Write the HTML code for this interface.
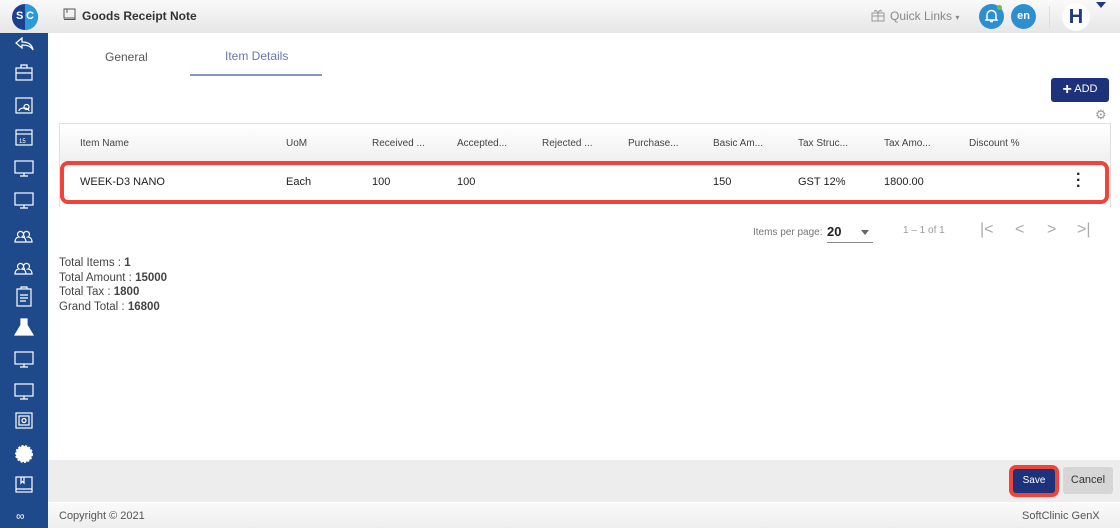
<!DOCTYPE html>
<html><head><meta charset="utf-8"><style>
*{margin:0;padding:0;box-sizing:border-box}
body{width:1120px;height:528px;overflow:hidden;background:#fff;font-family:"Liberation Sans",sans-serif;position:relative;color:#333}
.a{position:absolute}
.hdr{left:0;top:0;width:1120px;height:33px;background:linear-gradient(#fafafa,#e6e6e6)}
.side{left:0;top:33px;width:48px;height:495px;background:#1e4a8c}
.th{top:138px;font-size:10px;color:#444}
.td{top:176px;font-size:11px;color:#222}
</style></head><body>
<div class="a hdr"></div>
<div class="a" style="left:12px;top:4px;width:26px;height:26px;border-radius:50%;background:#1c3f8e;overflow:hidden">
<div class="a" style="left:13px;top:0;width:13px;height:26px;background:#2a9ad8"></div>
<span class="a" style="left:4px;top:6px;color:#fff;font-weight:bold;font-size:11px">S</span><span class="a" style="left:14px;top:6px;color:#fff;font-weight:bold;font-size:11px">C</span></div>
<svg class="a" style="left:63px;top:8px" width="13" height="12" viewBox="0 0 13 12"><rect x="1" y="1" width="11" height="9" fill="none" stroke="#555"/><path d="M1 10h11v1.5H1M4 1v4" stroke="#555" fill="none"/></svg>
<div class="a" style="left:82px;top:9px;font-size:12px;font-weight:bold;color:#333">Goods Receipt Note</div>
<svg class="a" style="left:871px;top:8px" width="14" height="14" viewBox="0 0 14 14"><rect x="1" y="5" width="12" height="8" fill="none" stroke="#999"/><path d="M1 8h12M7 5v8M7 5C5 1 3 2 4 4M7 5c2-4 4-3 3-1" stroke="#999" fill="none"/></svg>
<div class="a" style="left:890px;top:9px;font-size:12px;color:#888">Quick Links <span style="font-size:8px">▾</span></div>
<div class="a" style="left:979px;top:4px;width:25px;height:25px;border-radius:50%;background:#2d8fd0"></div>
<svg class="a" style="left:985px;top:9px" width="13" height="14" viewBox="0 0 13 14"><path d="M2 10V6a4.5 4.5 0 0 1 9 0v4l1 1H1z" fill="none" stroke="#fff" stroke-width="1.5"/><path d="M5 12.5h3" stroke="#fff" stroke-width="1.5"/></svg>
<div class="a" style="left:997px;top:5px;width:5px;height:5px;border-radius:50%;background:#6cc04a"></div>
<div class="a" style="left:1011px;top:4px;width:25px;height:25px;border-radius:50%;background:#2d8fd0;color:#fff;text-align:center;font-size:11px;font-weight:bold;line-height:25px">en</div>
<div class="a" style="left:1049px;top:6px;width:1px;height:22px;background:#ddd"></div>
<div class="a" style="left:1062px;top:3px;width:28px;height:28px;border-radius:50%;background:#fff;color:#1e3c7e;font-weight:bold;font-size:20px;text-align:center;line-height:28px">H</div>
<div class="a" style="left:1096px;top:2px;border:5px solid transparent;border-top:6px solid #1e3c7e"></div>

<div class="a side"></div>
<svg class="a" style="left:0;top:33px" width="48" height="495" viewBox="0 0 48 495" fill="none" stroke="#fff" stroke-width="1.2">
<path d="M22 5l-6 5 6 5v-3c5 0 9 1 11 5-1-6-5-8-11-8z"/>
<rect x="16" y="35" width="16" height="12"/><path d="M16 40h16M21 35v-3h6v3"/>
<rect x="16" y="65" width="16" height="15"/><path d="M19 78c0-4 10-4 10 0M24 74a2.5 2.5 0 1 0 0-.1"/>
<rect x="16" y="97" width="16" height="15"/><path d="M16 101h16"/><text x="19" y="110" fill="#fff" stroke="none" font-size="6">15</text>
<rect x="15" y="128" width="18" height="12"/><path d="M24 140v3M20 143h8"/>
<rect x="15" y="160" width="18" height="12"/><path d="M24 172v3M20 175h8"/>
<path d="M15 209c0-5 4-5 4-5a3 3 0 1 1 3 0s4 0 4 5zM22 209h10c0-5-4-5-4-5a3 3 0 1 0-3 0"/>
<path d="M15 241c0-5 4-5 4-5a3 3 0 1 1 3 0s4 0 4 5zM22 241h10c0-5-4-5-4-5a3 3 0 1 0-3 0"/>
<rect x="17" y="256" width="14" height="17"/><path d="M21 256v-2h6v2M20 262h8M20 265h8M20 268h6"/>
<path d="M21 286v6l-6 10h18l-6-10v-6z" fill="#fff"/>
<rect x="15" y="319" width="18" height="12"/><path d="M24 331v3M20 334h8"/>
<rect x="15" y="351" width="18" height="12"/><path d="M24 363v3M20 366h8"/>
<rect x="16" y="380" width="16" height="15"/><rect x="19" y="383" width="10" height="9"/><circle cx="24" cy="387.5" r="2"/>
<circle cx="24" cy="421" r="8" fill="#fff" stroke-dasharray="2 1.5" stroke-width="2"/>
<rect x="16" y="444" width="16" height="15"/><path d="M21 444v6l1.5-1.5 1.5 1.5v-6M16 456h16"/>
<text x="16" y="487" fill="#fff" stroke="none" font-size="12">∞</text>
</svg>

<div class="a" style="left:105px;top:50px;font-size:12px;color:#555">General</div>
<div class="a" style="left:225px;top:49px;font-size:12px;color:#6a77a9">Item Details</div>
<div class="a" style="left:190px;top:74px;width:132px;height:2px;background:#8896c9"></div>

<div class="a" style="left:1051px;top:78px;width:58px;height:24px;background:#1d327a;border-radius:3px;color:#fff;font-size:11px;line-height:22px;text-align:center"><b style="font-size:16px;vertical-align:-2px">+</b> ADD</div>
<div class="a" style="left:1095px;top:107px;font-size:13px;color:#999">⚙</div>

<div class="a" style="left:59px;top:123px;width:1052px;height:84px;border:1px solid #e0e0e0;border-bottom:none"></div>
<div class="a" style="left:60px;top:124px;width:1050px;height:37px;background:linear-gradient(#fff,#f0f0f0)"></div>
<div class="a th" style="left:80px">Item Name</div>
<div class="a th" style="left:286px">UoM</div>
<div class="a th" style="left:372px">Received ...</div>
<div class="a th" style="left:457px">Accepted...</div>
<div class="a th" style="left:542px">Rejected ...</div>
<div class="a th" style="left:628px">Purchase...</div>
<div class="a th" style="left:713px">Basic Am...</div>
<div class="a th" style="left:798px">Tax Struc...</div>
<div class="a th" style="left:884px">Tax Amo...</div>
<div class="a th" style="left:969px">Discount %</div>

<div class="a" style="left:60px;top:161px;width:1049px;height:43px;border:4px solid #f0443a;border-radius:8px"></div>
<div class="a td" style="left:80px">WEEK-D3 NANO</div>
<div class="a td" style="left:286px">Each</div>
<div class="a td" style="left:372px">100</div>
<div class="a td" style="left:457px">100</div>
<div class="a td" style="left:713px">150</div>
<div class="a td" style="left:798px">GST 12%</div>
<div class="a td" style="left:884px">1800.00</div>
<div class="a" style="left:1076px;top:172px;font-size:16px;font-weight:bold;line-height:6px;color:#222">·<br>·<br>·</div>

<div class="a" style="left:753px;top:227px;font-size:10px;color:#777">Items per page:</div>
<div class="a" style="left:827px;top:224px;font-size:13px;font-weight:bold;color:#222">20</div>
<div class="a" style="left:861px;top:230px;border:4px solid transparent;border-top:5px solid #666"></div>
<div class="a" style="left:827px;top:242px;width:46px;height:1px;background:#888"></div>
<div class="a" style="left:903px;top:225px;font-size:10px;color:#999">1 – 1 of 1</div>
<div class="a" style="left:980px;top:221px;font-size:16px;color:#aaa">|&lt;</div>
<div class="a" style="left:1015px;top:221px;font-size:16px;color:#aaa">&lt;</div>
<div class="a" style="left:1047px;top:221px;font-size:16px;color:#aaa">&gt;</div>
<div class="a" style="left:1077px;top:221px;font-size:16px;color:#aaa">&gt;|</div>

<div class="a" style="left:59px;top:256px;font-size:11.5px;line-height:14.5px;color:#444">Total Items : <b>1</b><br>Total Amount : <b>15000</b><br>Total Tax : <b>1800</b><br>Grand Total : <b>16800</b></div>

<div class="a" style="left:48px;top:460px;width:1072px;height:42px;background:#ededed"></div>
<div class="a" style="left:1009px;top:465px;width:50px;height:32px;border-radius:7px;background:#f0443a"></div>
<div class="a" style="left:1013px;top:469px;width:42px;height:24px;background:#1d327a;border-radius:3px;color:#fff;font-size:10px;text-align:center;line-height:24px">Save</div>
<div class="a" style="left:1063px;top:467px;width:50px;height:27px;background:#d6d6d6;border-radius:3px;color:#333;font-size:11px;text-align:center;line-height:27px">Cancel</div>

<div class="a" style="left:48px;top:503px;width:1072px;height:25px;background:linear-gradient(#fafafa,#eee)"></div>
<div class="a" style="left:59px;top:510px;font-size:11px;color:#555">Copyright © 2021</div>
<div class="a" style="left:1022px;top:510px;font-size:11px;color:#555">SoftClinic GenX</div>
</body></html>
